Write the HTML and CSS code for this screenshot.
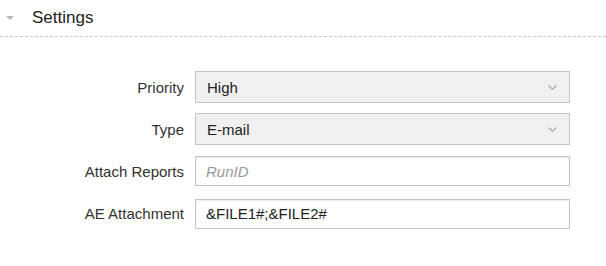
FILE: index.html
```html
<!DOCTYPE html>
<html lang="en">
<head>
  <meta charset="UTF-8" />
  <title>Settings</title>
  <meta name="viewport" content="width=device-width, initial-scale=1.0" />
  <link rel="stylesheet" href="styles.css">
</head>
<body>
  <div class="section-header">
    <span class="caret"></span>
    <span class="section-title">Settings</span>
  </div>

  <div class="settings-form">
    <div class="form-row">
      <label class="form-label">Priority</label>
      <div class="select">
        <span>High</span>
        <svg class="chevron" width="9" height="5" viewBox="0 0 9 5"><path d="M0.5 0.5 L4.5 4.2 L8.5 0.5" fill="none" stroke="#a8a8a8" stroke-width="1.2"/></svg>
      </div>
    </div>
    <div class="form-row">
      <label class="form-label">Type</label>
      <div class="select">
        <span>E-mail</span>
        <svg class="chevron" width="9" height="5" viewBox="0 0 9 5"><path d="M0.5 0.5 L4.5 4.2 L8.5 0.5" fill="none" stroke="#a8a8a8" stroke-width="1.2"/></svg>
      </div>
    </div>
    <div class="form-row">
      <label class="form-label">Attach Reports</label>
      <input class="text-field" type="text" placeholder="RunID" />
    </div>
    <div class="form-row">
      <label class="form-label">AE Attachment</label>
      <input class="text-field" type="text" value="&amp;FILE1#;&amp;FILE2#" />
    </div>
  </div>
</body>
</html>
```

FILE: styles.css
```css
* {
  box-sizing: border-box;
}

body {
  margin: 0;
  font-family: "Liberation Sans", Arial, sans-serif;
  color: #333;
  background: #fff;
}

.section-header {
  display: flex;
  align-items: center;
  padding: 8px 0 8px 6px;
  border-bottom: 1px dashed #c8c8c8;
}

.caret {
  width: 0;
  height: 0;
  border-left: 4px solid transparent;
  border-right: 4px solid transparent;
  border-top: 4px solid #b8b8b8;
  margin-right: 18px;
}

.section-title {
  font-size: 17px;
  line-height: 20px;
  color: #222;
}

.settings-form {
  padding-top: 29px;
}

.form-row {
  display: flex;
  align-items: center;
  height: 42px;
  gap: 11px;
}

.form-row:last-child {
  height: 43px;
}

.form-label {
  width: 184px;
  text-align: right;
  font-size: 15px;
  color: #333;
}

.select {
  width: 375px;
  height: 32px;
  display: flex;
  align-items: center;
  justify-content: space-between;
  padding: 0 12px 0 11px;
  background: #f0f0f0;
  border: 1px solid #c4c4c4;
  font-size: 15px;
  color: #222;
}

.chevron {
  display: block;
}

.text-field {
  width: 375px;
  height: 30px;
  padding: 0 10px;
  border: 1px solid #c4c4c4;
  border-radius: 0;
  box-shadow: inset 0 1px 2px rgba(0, 0, 0, 0.08);
  font-family: "Liberation Sans", Arial, sans-serif;
  font-size: 15px;
  color: #222;
  outline: none;
}

.text-field::placeholder {
  color: #999;
  font-style: italic;
}
```
